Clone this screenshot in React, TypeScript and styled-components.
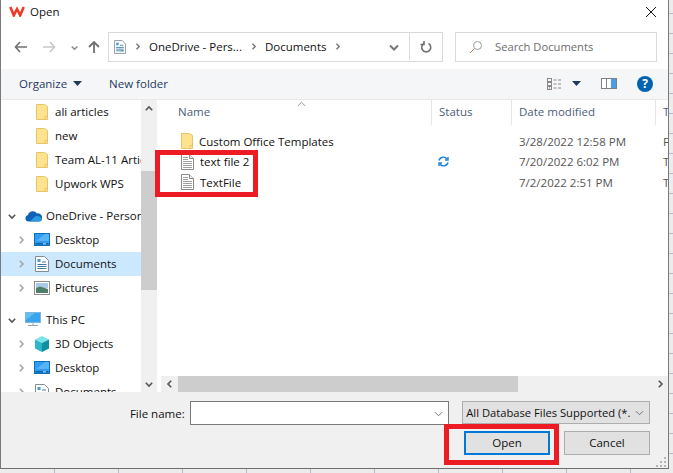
import styled, { createGlobalStyle } from 'styled-components';
import { ReactNode } from 'react';

const Global = createGlobalStyle`
  html, body { margin: 0; padding: 0; background: #fff; }
  body { font-family: "Open Sans", "Liberation Sans", sans-serif; font-size: 11.5px; color: #111; }
  * { box-sizing: border-box; }
`;

// the spreadsheet peeking out from behind the dialog
const Sheet = styled.div`
  position: relative;
  width: 673px;
  height: 473px;
  overflow: hidden;
  background-color: #ececec;
  background-image:
    linear-gradient(to right, #b9b9cc 1px, transparent 1px),
    linear-gradient(to bottom, #b9b9cc 1px, transparent 1px);
  background-size: 64px 100%, 100% 20px;
  background-position: 54px 0, 0 13px;
`;

const Dialog = styled.div`
  width: 669px;
  height: 469px;
  display: flex;
  flex-direction: column;
  background: #fff;
  border-left: 1px solid #7a7a7a;
  border-right: 1px solid #7a7a7a;
  border-bottom: 1px solid #6f6f6f;
`;

const TitleBar = styled.div`
  height: 24px;
  flex: none;
  display: flex;
  align-items: center;
  padding: 0 12px 1px 8px;
  gap: 5px;
`;

const CloseX = styled.div`
  margin-left: auto;
  display: flex;
`;

const NavBar = styled.div`
  height: 45px;
  flex: none;
  display: flex;
  align-items: center;
  padding: 8px 11px 7px 9px;
`;

const NavButton = styled.div<{ $w: number }>`
  width: ${(p) => p.$w}px;
  flex: none;
  display: flex;
  justify-content: center;
`;

const AddressBox = styled.div`
  width: 335px;
  height: 30px;
  margin-left: 1px;
  display: flex;
  align-items: center;
  border: 1px solid #d9d9d9;
  padding: 0 0 1px 5px;
`;

const Crumb = styled.span`
  width: 23px;
  flex: none;
  display: flex;
  justify-content: center;
`;

const AddressEnd = styled.div`
  margin-left: auto;
  height: 100%;
  display: flex;
  align-items: center;
`;

const RefreshCell = styled.div`
  width: 33px;
  height: 100%;
  margin-left: 10px;
  border-left: 1px solid #d9d9d9;
  display: flex;
  align-items: center;
  justify-content: center;
`;

const SearchBox = styled.div`
  width: 202px;
  height: 30px;
  margin-left: 12px;
  display: flex;
  align-items: center;
  gap: 13px;
  padding: 0 0 1px 14px;
  border: 1px solid #d9d9d9;
  color: #6d6d6d;
  font-size: 11.2px;
`;

const ToolBar = styled.div`
  height: 31px;
  flex: none;
  display: flex;
  align-items: center;
  background: #f5f6f7;
  border-bottom: 1px solid #e9e9e9;
  padding: 0 15px 1px 18px;
  color: #1e3a5f;
`;

const ToolItem = styled.div<{ $gap?: number }>`
  display: flex;
  align-items: center;
  gap: 6px;
  margin-right: ${(p) => p.$gap ?? 0}px;
`;

const ToolRight = styled.div`
  margin-left: auto;
  display: flex;
  align-items: center;
`;

const Help = styled.div`
  width: 16px;
  height: 16px;
  margin-left: 8px;
  border-radius: 50%;
  background: #0063b1;
  color: #fff;
  font-weight: 700;
  font-size: 12px;
  display: flex;
  align-items: center;
  justify-content: center;
`;

const Body = styled.div`
  flex: 1;
  min-height: 0;
  display: flex;
`;

const Sidebar = styled.div`
  width: 140px;
  flex: none;
  overflow: hidden;
`;

const TreeGroup = styled.div`
  margin-bottom: 8px;
`;

const TreeRow = styled.div<{ $indent: number; $selected?: boolean }>`
  height: 24px;
  display: flex;
  align-items: center;
  white-space: nowrap;
  overflow: hidden;
  padding-left: ${(p) => p.$indent}px;
  padding-bottom: 1px;
  background: ${(p) => (p.$selected ? '#cce8ff' : 'transparent')};
`;

const Twisty = styled.span`
  width: 16px;
  flex: none;
  display: flex;
  justify-content: center;
`;

const TreeIcon = styled.span`
  width: 18px;
  flex: none;
  display: flex;
  justify-content: center;
  margin: 0 4px;
`;

const VScroll = styled.div`
  width: 16px;
  flex: none;
  display: flex;
  flex-direction: column;
  background: #f0f0f0;
`;

const ArrowCell = styled.div`
  height: 17px;
  flex: none;
  display: flex;
  align-items: center;
  justify-content: center;
`;

const VTrack = styled.div`
  flex: 1;
  padding: 54px 0 85px;
  display: flex;
`;

const VThumb = styled.div`
  flex: 1;
  background: #cdcdcd;
`;

const Main = styled.div`
  flex: 1;
  min-width: 0;
  margin-left: 4px;
  display: flex;
  flex-direction: column;
`;

const Files = styled.div`
  flex: 1;
  min-height: 0;
  overflow: hidden;
`;

const cols = '271px 80px 144px 40px';

const HeaderRow = styled.div`
  position: relative;
  height: 25px;
  display: grid;
  grid-template-columns: ${cols};
  margin-bottom: 6px;
  color: #4c607a;
`;

const HeaderCell = styled.div<{ $pad: number; $line?: boolean }>`
  padding-left: ${(p) => p.$pad}px;
  padding-top: 4px;
  white-space: nowrap;
  overflow: hidden;
  border-right: ${(p) => (p.$line ? '1px solid #e5e5e5' : 'none')};
`;

const SortCaret = styled.span`
  position: absolute;
  left: 136px;
  top: 0;
  display: flex;
`;

const FileRow = styled.div`
  height: 20.5px;
  display: grid;
  grid-template-columns: ${cols};
  align-items: center;
`;

const NameCell = styled.div`
  display: flex;
  align-items: center;
  gap: 6px;
  padding-left: 20px;
`;

const StatusCell = styled.div`
  display: flex;
  padding-left: 6px;
`;

const MutedCell = styled.div<{ $pad: number }>`
  padding-left: ${(p) => p.$pad}px;
  color: #555;
  white-space: nowrap;
  overflow: hidden;
`;

const HScroll = styled.div`
  height: 16px;
  flex: none;
  display: flex;
  align-items: center;
  background: #f0f0f0;
`;

const HThumb = styled.div`
  width: 340px;
  height: 100%;
  background: #cdcdcd;
`;

const HButton = styled.div<{ $end?: boolean }>`
  width: 17px;
  display: flex;
  justify-content: center;
  margin-left: ${(p) => (p.$end ? 'auto' : '0')};
`;

const Footer = styled.div`
  height: 76px;
  flex: none;
  background: #f0f0f0;
  padding: 9px 18px 0 0;
  display: flex;
  flex-direction: column;
`;

const FormRow = styled.div`
  display: flex;
  align-items: flex-start;
`;

const FileLabel = styled.div`
  width: 189px;
  height: 24px;
  display: flex;
  align-items: center;
  justify-content: flex-end;
  padding-right: 5px;
  color: #111;
`;

const FileInput = styled.div`
  width: 260px;
  height: 24px;
  background: #fff;
  border: 1px solid #7a7a7a;
  display: flex;
  align-items: center;
  justify-content: flex-end;
  padding-right: 5px;
`;

const TypeSelect = styled.div`
  width: 188px;
  height: 23px;
  margin-left: 13px;
  background: #e1e1e1;
  border: 1px solid #adadad;
  display: flex;
  align-items: center;
  justify-content: space-between;
  padding: 0 5px 0 3px;
  white-space: nowrap;
  font-size: 11.2px;
`;

const ButtonRow = styled.div`
  display: flex;
  justify-content: flex-end;
  gap: 14px;
  margin-top: 6px;
`;

const DialogButton = styled.div<{ $primary?: boolean }>`
  width: 86px;
  height: 24px;
  display: flex;
  align-items: center;
  justify-content: center;
  padding-bottom: 1px;
  background: #e1e1e1;
  border: ${(p) => (p.$primary ? '2px solid #0078d7' : '1px solid #adadad')};
`;

// the red marks someone drew over the screenshot
const RedMark = styled.div<{ $x: number; $y: number; $w: number; $h: number }>`
  position: absolute;
  left: ${(p) => p.$x}px;
  top: ${(p) => p.$y}px;
  width: ${(p) => p.$w}px;
  height: ${(p) => p.$h}px;
  border: 5px solid #ed1c24;
`;

const Grip = styled.svg`
  position: absolute;
  right: 7px;
  bottom: 6px;
`;

const Chevron = ({ dir, color = '#606060', size = 9, w = 2 }: { dir: 'l' | 'r' | 'u' | 'd'; color?: string; size?: number; w?: number }) => {
  const d = { l: 'M6.5 1 2.5 5l4 4', r: 'M3.5 1l4 4-4 4', u: 'M1 6.5l4-4 4 4', d: 'M1 3.5l4 4 4-4' }[dir];
  return (
    <svg width={size} height={size} viewBox="0 0 10 10" fill="none">
      <path d={d} stroke={color} strokeWidth={w} />
    </svg>
  );
};

const Caret = () => (
  <svg width="9" height="5" viewBox="0 0 9 5">
    <path d="M0 0h9L4.500 5z" fill="#1e3a5f" />
  </svg>
);

const WpsLogo = () => (
  <svg width="16" height="11" viewBox="0 0 16 11" fill="none">
    <path d="M1.300 1 4.800 9.300 8 3l3.200 6.300L14.700 1" stroke="#ee3a24" strokeWidth="2.600" />
  </svg>
);

const Folder = () => (
  <svg width="12" height="16" viewBox="0 0 12 16">
    <path d="M.5.5h8l3 2v13H.5z" fill="#fde28f" stroke="#e8c468" />
    <path d="M9 15.500v-3h2.500" fill="none" stroke="#e8c468" />
  </svg>
);

const TextDoc = () => (
  <svg width="13" height="16" viewBox="0 0 13 16">
    <path d="M.5.5h8l4 4v11H.5z" fill="#fff" stroke="#8a8a8a" />
    <path d="M8.500.5v4h4" fill="#eee" stroke="#8a8a8a" />
    <path d="M2 3.500h5M2 5.500h5M2 7.500h9M2 9.500h9M2 11.500h9M2 13.500h9" stroke="#a0a0a0" />
  </svg>
);

const DocsIcon = ({ size = 16 }: { size?: number }) => (
  <svg width={size - 2} height={size} viewBox="0 0 14 16">
    <path d="M.5.5h9l4 4v11H.5z" fill="#fff" stroke="#7f8c99" />
    <path d="M2.500 3h3v3h-3z" fill="#4a9ad4" />
    <path d="M7 6h4M2.500 8.500h9M2.500 10.500h9M2.500 12.500h9" stroke="#3f7ba8" />
    <path d="M8 12.500h3" stroke="#3ba272" />
  </svg>
);

const Cloud = () => (
  <svg width="17" height="12" viewBox="0 0 17 12">
    <path d="M3.500 11.500a3.300 3.300 0 0 1-.5-6.500A5 5 0 0 1 12 3.500a4 4 0 0 1 2 8z" fill="#0f62b5" />
    <path d="M5 11.500 10 6.500c2.500-1.500 6.500.5 7 3 0 1-1 2-2.500 2z" fill="#2a9be0" />
  </svg>
);

const Monitor = ({ small }: { small?: boolean }) =>
  small ? (
    <svg width="16" height="13" viewBox="0 0 16 13">
      <rect x=".5" y=".5" width="15" height="12" fill="#2f9cf0" stroke="#0d6fb8" />
      <path d="M1 9 11 1h4v7H1z" fill="#55b4f5" />
      <path d="M1.500 10.800h13" stroke="#0a5fa3" strokeWidth="1.500" />
      <path d="M9 10.800h3" stroke="#c9e6fb" />
    </svg>
  ) : (
    <svg width="16" height="15" viewBox="0 0 16 15">
      <rect x=".5" y=".5" width="15" height="10" fill="#62bdf5" stroke="#7fb6dc" />
      <path d="M1 8 10 1h5v9H1z" fill="#38a3ee" />
      <path d="M8 11v2M3 13.500h10" stroke="#8fa8bb" />
    </svg>
  );

const Picture = () => (
  <svg width="16" height="14" viewBox="0 0 16 14">
    <rect x=".5" y=".5" width="15" height="13" fill="#fff" stroke="#8c8c8c" />
    <rect x="2" y="2" width="12" height="5" fill="#a9cbe6" />
    <path d="M2 7l4-1.500L14 8v4H2z" fill="#4f7f6b" />
  </svg>
);

const Cube = () => (
  <svg width="16" height="16" viewBox="0 0 16 16">
    <path d="M8 0l7 3.500-7 3.500-7-3.500z" fill="#7fe3ec" />
    <path d="M1 3.500 8 7v9l-7-3.500z" fill="#2fb6c6" />
    <path d="M15 3.500 8 7v9l7-3.500z" fill="#0f8fa3" />
  </svg>
);

const ViewsIcon = () => (
  <svg width="16" height="12" viewBox="0 0 16 12" fill="none">
    <rect x=".5" y=".5" width="4" height="3" stroke="#888" />
    <rect x=".5" y="4.500" width="4" height="3" stroke="#888" />
    <rect x=".5" y="8.500" width="4" height="3" stroke="#888" />
    <path d="M2 10h1" stroke="#d33" />
    <path d="M6.500 2h9M6.500 6h9M6.500 10h9" stroke="#888" strokeDasharray="3 1.500" />
  </svg>
);

const PaneIcon = () => (
  <svg width="16" height="11" viewBox="0 0 16 11">
    <rect x=".5" y=".5" width="15" height="10" fill="#fff" stroke="#808080" />
    <path d="M10 1h5v9h-5z" fill="#4a9ee8" />
    <path d="M5.500 1v9" stroke="#808080" />
  </svg>
);

const SyncIcon = () => (
  <svg width="11" height="11" viewBox="0 0 11 11" fill="none" stroke="#1a7fd4" strokeWidth="1.400">
    <path d="M1 4.500A4.500 4.500 0 0 1 9 3" />
    <path d="M10 1v3H7" />
    <path d="M10 6.500A4.500 4.500 0 0 1 2 8" />
    <path d="M1 10V7h3" />
  </svg>
);

type TreeItem = { label: string; icon: ReactNode; indent: number; twisty?: 'r' | 'd'; selected?: boolean };

const groups: TreeItem[][] = [
  [
    { label: 'ali articles', icon: <Folder />, indent: 28 },
    { label: 'new', icon: <Folder />, indent: 28 },
    { label: 'Team AL-11 Articles', icon: <Folder />, indent: 28 },
    { label: 'Upwork WPS', icon: <Folder />, indent: 28 },
  ],
  [
    { label: 'OneDrive - Personal', icon: <Cloud />, indent: 3, twisty: 'd' },
    { label: 'Desktop', icon: <Monitor small />, indent: 12, twisty: 'r' },
    { label: 'Documents', icon: <DocsIcon />, indent: 12, twisty: 'r', selected: true },
    { label: 'Pictures', icon: <Picture />, indent: 12, twisty: 'r' },
  ],
  [
    { label: 'This PC', icon: <Monitor />, indent: 3, twisty: 'd' },
    { label: '3D Objects', icon: <Cube />, indent: 12, twisty: 'r' },
    { label: 'Desktop', icon: <Monitor small />, indent: 12, twisty: 'r' },
    { label: 'Documents', icon: <DocsIcon />, indent: 12, twisty: 'r' },
  ],
];

const files = [
  { name: 'Custom Office Templates', icon: <Folder />, date: '3/28/2022 12:58 PM', type: 'File folder' },
  { name: 'text file 2', icon: <TextDoc />, date: '7/20/2022 6:02 PM', type: 'Text', synced: true },
  { name: 'TextFile', icon: <TextDoc />, date: '7/2/2022 2:51 PM', type: 'Text' },
];

export default function App() {
  return (
    <Sheet>
      <Global />
      <Dialog>
        <TitleBar>
          <WpsLogo />
          <span>Open</span>
          <CloseX>
            <svg width="10" height="10" viewBox="0 0 10 10">
              <path d="M0 0l10 10M10 0 0 10" stroke="#111" strokeWidth="1" />
            </svg>
          </CloseX>
        </TitleBar>
        <NavBar>
          <NavButton $w={20}>
            <svg width="13" height="12" viewBox="0 0 13 12" fill="none">
              <path d="M6 1 1.500 6 6 11M2 6h11" stroke="#707070" strokeWidth="1.600" />
            </svg>
          </NavButton>
          <NavButton $w={38}>
            <svg width="13" height="12" viewBox="0 0 13 12" fill="none">
              <path d="M7 1l4.500 5L7 11M11 6H0" stroke="#c8c8c8" strokeWidth="1.600" />
            </svg>
          </NavButton>
          <NavButton $w={12}>
            <Chevron dir="d" size={7} color="#8a8a8a" />
          </NavButton>
          <NavButton $w={27}>
            <svg width="12" height="12" viewBox="0 0 12 12" fill="none">
              <path d="M1 6l5-5 5 5M6 1v11" stroke="#707070" strokeWidth="1.800" />
            </svg>
          </NavButton>
          <AddressBox>
            <DocsIcon size={14} />
            <Crumb>
              <Chevron dir="r" size={7} color="#777" />
            </Crumb>
            <span>OneDrive - Pers...</span>
            <Crumb>
              <Chevron dir="r" size={7} color="#777" />
            </Crumb>
            <span>Documents</span>
            <Crumb>
              <Chevron dir="r" size={7} color="#777" />
            </Crumb>
            <AddressEnd>
              <Chevron dir="d" size={10} color="#777" />
              <RefreshCell>
                <svg width="12" height="12" viewBox="0 0 12 12" fill="none" stroke="#707070" strokeWidth="1.600">
                  <path d="M4 2.500a4.500 4.500 0 1 0 4.500 0" />
                  <path d="M4 0v3.500H.5" />
                </svg>
              </RefreshCell>
            </AddressEnd>
          </AddressBox>
          <SearchBox>
            <svg width="12" height="12" viewBox="0 0 12 12" fill="none" stroke="#9a9a9a">
              <circle cx="7.500" cy="4.500" r="4" />
              <path d="M4.500 7.500 0 12" stroke="#c08a70" />
            </svg>
            <span>Search Documents</span>
          </SearchBox>
        </NavBar>
        <ToolBar>
          <ToolItem $gap={27}>
            Organize <Caret />
          </ToolItem>
          <ToolItem>New folder</ToolItem>
          <ToolRight>
            <ViewsIcon />
            <NavButton $w={26}>
              <Caret />
            </NavButton>
            <NavButton $w={40}>
              <PaneIcon />
            </NavButton>
            <Help>?</Help>
          </ToolRight>
        </ToolBar>
        <Body>
          <Sidebar>
            {groups.map((group, i) => (
              <TreeGroup key={i}>
                {group.map((item) => (
                  <TreeRow key={item.label} $indent={item.indent} $selected={item.selected}>
                    {item.twisty && (
                      <Twisty>
                        <Chevron dir={item.twisty} size={8} color={item.twisty === 'd' ? '#555' : '#a6a6a6'} />
                      </Twisty>
                    )}
                    <TreeIcon>{item.icon}</TreeIcon>
                    {item.label}
                  </TreeRow>
                ))}
              </TreeGroup>
            ))}
          </Sidebar>
          <VScroll>
            <ArrowCell>
              <Chevron dir="u" size={8} color="#555" />
            </ArrowCell>
            <VTrack>
              <VThumb />
            </VTrack>
            <ArrowCell>
              <Chevron dir="d" size={8} color="#555" />
            </ArrowCell>
          </VScroll>
          <Main>
            <Files>
              <HeaderRow>
                <HeaderCell $pad={17} $line>
                  Name
                </HeaderCell>
                <SortCaret>
                  <Chevron dir="u" size={9} color="#888" w={1} />
                </SortCaret>
                <HeaderCell $pad={7} $line>
                  Status
                </HeaderCell>
                <HeaderCell $pad={7} $line>
                  Date modified
                </HeaderCell>
                <HeaderCell $pad={7}>Type</HeaderCell>
              </HeaderRow>
              {files.map((f) => (
                <FileRow key={f.name}>
                  <NameCell>
                    {f.icon}
                    {f.name}
                  </NameCell>
                  <StatusCell>{f.synced && <SyncIcon />}</StatusCell>
                  <MutedCell $pad={7}>{f.date}</MutedCell>
                  <MutedCell $pad={7}>{f.type}</MutedCell>
                </FileRow>
              ))}
            </Files>
            <HScroll>
              <HButton>
                <Chevron dir="l" size={8} color="#555" />
              </HButton>
              <HThumb />
              <HButton $end>
                <Chevron dir="r" size={8} color="#555" />
              </HButton>
            </HScroll>
          </Main>
        </Body>
        <Footer>
          <FormRow>
            <FileLabel>File name:</FileLabel>
            <FileInput>
              <Chevron dir="d" size={9} color="#666" w={1} />
            </FileInput>
            <TypeSelect>
              All Database Files Supported (*.
              <Chevron dir="d" size={9} color="#666" w={1} />
            </TypeSelect>
          </FormRow>
          <ButtonRow>
            <DialogButton $primary>Open</DialogButton>
            <DialogButton>Cancel</DialogButton>
          </ButtonRow>
        </Footer>
      </Dialog>
      <RedMark $x={155} $y={150} $w={103} $h={47} />
      <RedMark $x={444} $y={424} $w={115} $h={41} />
      <Grip width="10" height="10" viewBox="0 0 10 10" fill="#b5b5b5">
        <path d="M8 0h2v2H8zM4 4h2v2H4zM8 4h2v2H8zM0 8h2v2H0zM4 8h2v2H4zM8 8h2v2H8z" />
      </Grip>
    </Sheet>
  );
}
